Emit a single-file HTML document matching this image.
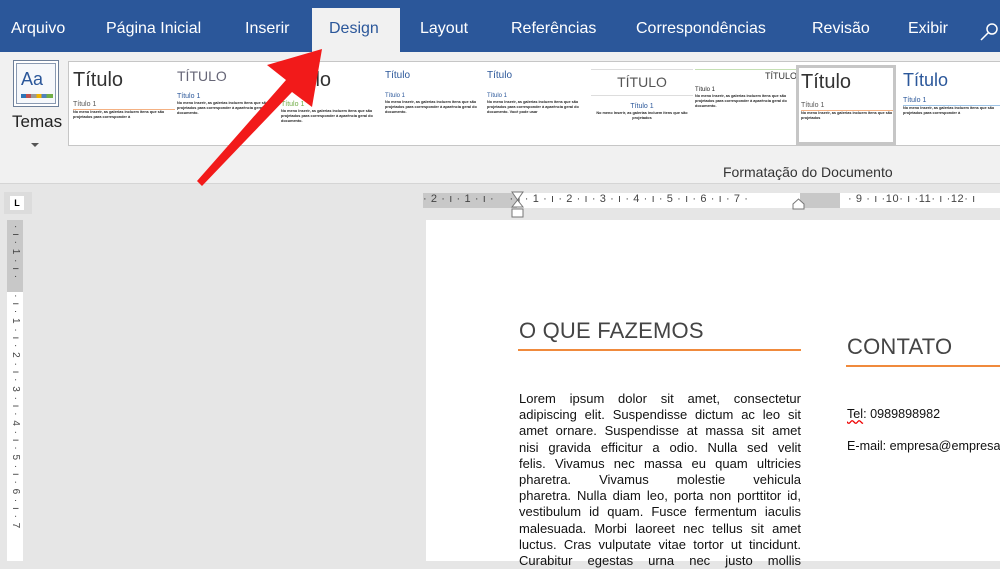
<!DOCTYPE html>
<html><head><meta charset="utf-8"><style>
*{margin:0;padding:0;box-sizing:border-box}
body{width:1000px;height:561px;overflow:hidden;position:relative;background:#e6e6e6;font-family:"Liberation Sans",sans-serif}
.abs{position:absolute}
.tabs{left:0;top:0;width:1000px;height:52px;background:#2b579a}
.tab{position:absolute;top:20px;color:#fff;font-size:16px;white-space:nowrap}
.ribbon{left:0;top:52px;width:1000px;height:132px;background:#f1f1f1;border-bottom:1px solid #d5d5d5}
.gal{left:68px;top:61px;width:940px;height:85px;background:#fff;border:1px solid #c6c6c6}
.it{position:absolute;top:0;height:83px;width:102px;overflow:hidden;font-size:3.8px;line-height:5.2px;color:#222;font-weight:bold}
.it .t{font-weight:normal}
.ruler{background:#fff}
.body{position:absolute;left:519px;top:391px;width:282px;font-size:13px;line-height:16.2px;color:#111}
.body div{text-align:justify;text-align-last:justify;white-space:nowrap}
</style></head><body>
<div class="abs tabs"></div>
<div class="abs" style="left:312px;top:8px;width:88px;height:46px;background:#f1f1f1"></div>
<div class="tab" style="left:11px">Arquivo</div>
<div class="tab" style="left:106px">Página Inicial</div>
<div class="tab" style="left:245px">Inserir</div>
<div class="tab" style="left:329px;color:#2b579a">Design</div>
<div class="tab" style="left:420px">Layout</div>
<div class="tab" style="left:511px">Referências</div>
<div class="tab" style="left:636px">Correspondências</div>
<div class="tab" style="left:812px">Revisão</div>
<div class="tab" style="left:908px">Exibir</div>
<svg class="abs" style="left:978px;top:22px" width="22" height="20"><circle cx="14" cy="7" r="5" fill="none" stroke="#fff" stroke-width="1.5"/><line x1="10" y1="11" x2="3" y2="18" stroke="#fff" stroke-width="1.5"/></svg>
<div class="abs ribbon"></div>
<div class="abs" style="left:13px;top:60px;width:46px;height:47px;border:1px solid #6d7f99;background:#fff;padding:2px">
<div style="width:40px;height:41px;border:1px solid #8a9ab2;background:#f6f8fb;position:relative">
<div style="position:absolute;left:4px;top:5px;font-size:18px;color:#2b579a">Aa</div>
<div style="position:absolute;left:4px;top:30px;width:32px;height:4px;background:linear-gradient(90deg,#2e75b6 0 16%,#c0504d 16% 32%,#999 32% 48%,#f0b400 48% 64%,#4f81bd 64% 80%,#70ad47 80%)"></div></div></div>
<div class="abs" style="left:12px;top:112px;font-size:17px;color:#222">Temas</div>
<div class="abs" style="left:31px;top:143px;width:0;height:0;border-left:4px solid transparent;border-right:4px solid transparent;border-top:4px solid #555"></div>
<div class="abs gal">
<div class="it" style="left:4px"><div class="t" style="font-size:20px;line-height:24px;margin-top:6px;color:#333">Título</div><div class="t" style="font-size:7px;line-height:9px;margin-top:8px;color:#555;border-bottom:1px solid #f4b183">Título 1</div>No meno Inserir, as galerias incluem itens que são projetados para corresponder à</div>
<div class="it" style="left:108px"><div class="t" style="font-size:14px;line-height:16px;margin-top:6px;color:#667">TÍTULO</div><div class="t" style="font-size:7px;line-height:9px;margin-top:8px;color:#2b579a">Título 1</div>No meno Inserir, as galerias incluem itens que são projetados para corresponder à aparência geral do documento.</div>
<div class="it" style="left:212px"><div class="t" style="font-size:20px;line-height:24px;margin-top:6px;color:#333">Título</div><div class="t" style="font-size:7px;line-height:9px;margin-top:8px;color:#70ad47">Título 1</div>No meno Inserir, as galerias incluem itens que são projetados para corresponder à aparência geral do documento.</div>
<div class="it" style="left:316px"><div class="t" style="font-size:10px;line-height:12px;margin-top:8px;color:#2b579a">Título</div><div class="t" style="font-size:6px;line-height:8px;margin-top:10px;color:#2b579a">Título 1</div>No meno Inserir, as galerias incluem itens que são projetados para corresponder à aparência geral do documento.</div>
<div class="it" style="left:418px"><div class="t" style="font-size:10px;line-height:12px;margin-top:8px;color:#2b579a">Título</div><div class="t" style="font-size:6px;line-height:8px;margin-top:10px;color:#2b579a">Título 1</div>No meno Inserir, as galerias incluem itens que são projetados para corresponder à aparência geral do documento. Você pode usar</div>
<div class="it" style="left:522px;text-align:center"><div class="t" style="border-top:1px solid #ddd;border-bottom:1px solid #ddd;font-size:14px;line-height:25px;margin-top:7px;color:#555">TÍTULO</div><div class="t" style="font-size:7px;line-height:9px;margin-top:6px;color:#2b579a">Título 1</div>No meno Inserir, as galerias incluem itens que são projetados</div>
<div class="it" style="left:626px"><div class="t" style="border-top:1px solid #c5e0b4;text-align:right;font-size:9px;line-height:12px;margin-top:7px;color:#333">TÍTULO</div><div class="t" style="font-size:6px;line-height:8px;margin-top:4px">Título 1</div>No meno Inserir, as galerias incluem itens que são projetados para corresponder à aparência geral do documento.</div>
<div class="it" style="left:727px;top:3px;height:80px;width:100px;border:3px solid #c6c6c6;padding-left:2px"><div class="t" style="font-size:20px;line-height:24px;margin-top:2px;color:#333">Título</div><div class="t" style="font-size:7px;line-height:9px;margin-top:7px;color:#555;border-bottom:1px solid #f4b183">Título 1</div>No meno Inserir, as galerias incluem itens que são projetados</div>
<div class="it" style="left:834px"><div class="t" style="font-size:18px;line-height:22px;margin-top:7px;color:#2b579a">Título</div><div class="t" style="font-size:7px;line-height:9px;margin-top:5px;color:#2b579a;border-bottom:1px solid #9dc3e6">Título 1</div>No meno Inserir, as galerias incluem itens que são projetados para corresponder à</div>
</div>
<div class="abs" style="left:723px;top:164px;font-size:14px;color:#333">Formatação do Documento</div>
<div class="abs" style="left:4px;top:192px;width:28px;height:22px;background:#dcdcdc"><div style="margin:4px 6px;width:14px;height:14px;background:#fff;font-size:9px;font-weight:bold;text-align:center;line-height:14px">L</div></div>
<div class="abs" style="left:423px;top:193px;width:94px;height:15px;background:#c8c8c8"></div>
<div class="abs ruler" style="left:517px;top:193px;width:283px;height:15px"></div>
<div class="abs" style="left:800px;top:193px;width:40px;height:15px;background:#c8c8c8"></div>
<div class="abs ruler" style="left:840px;top:193px;width:160px;height:15px"></div>
<div class="abs" style="left:423px;top:193px;font-size:11px;color:#444;letter-spacing:0.6px;white-space:nowrap">· 2 · ı · 1 · ı · <span style="opacity:0">X</span> · ı · 1 · ı · 2 · ı · 3 · ı · 4 · ı · 5 · ı · 6 · ı · 7 ·</div>
<div class="abs" style="left:848px;top:193px;font-size:11px;color:#444;letter-spacing:0.6px;white-space:nowrap">· 9 · ı ·10· ı ·11· ı ·12· ı</div>
<svg class="abs" style="left:511px;top:191px" width="14" height="28"><path d="M1 1H12L6.5 9L12 16H1L6.5 9Z" fill="#fff" stroke="#777"/><rect x="1" y="18" width="11" height="8" fill="#fff" stroke="#777"/></svg>
<svg class="abs" style="left:792px;top:198px" width="14" height="12"><path d="M1 11V6L6.5 1L12 6V11Z" fill="#fff" stroke="#777"/></svg>
<div class="abs" style="left:7px;top:220px;width:16px;height:72px;background:#c8c8c8"></div>
<div class="abs" style="left:7px;top:292px;width:16px;height:269px;background:#fff"></div>
<div class="abs" style="left:9px;top:225px;width:12px;height:340px;font-size:10px;color:#444;writing-mode:vertical-rl;white-space:nowrap;letter-spacing:1px">· ı · 1 · ı · <span style="opacity:0">ıı</span> · ı · 1 · ı · 2 · ı · 3 · ı · 4 · ı · 5 · ı · 6 · ı · 7</div>
<div class="abs" style="left:426px;top:220px;width:574px;height:341px;background:#fff"></div>
<div class="abs" style="left:519px;top:318px;font-size:22px;color:#444;letter-spacing:0.2px">O QUE FAZEMOS</div>
<div class="abs" style="left:518px;top:349px;width:283px;height:2px;background:#f08a3c"></div>
<div class="abs" style="left:847px;top:334px;font-size:22px;color:#444;letter-spacing:0.2px">CONTATO</div>
<div class="abs" style="left:846px;top:365px;width:154px;height:2px;background:#f08a3c"></div>
<div class="body">
<div>Lorem ipsum dolor sit amet, consectetur</div>
<div>adipiscing elit. Suspendisse dictum ac leo sit</div>
<div>amet ornare. Suspendisse at massa sit amet</div>
<div>nisi gravida efficitur a odio. Nulla sed velit</div>
<div>felis. Vivamus nec massa eu quam ultricies</div>
<div>pharetra. Vivamus molestie vehicula</div>
<div>pharetra. Nulla diam leo, porta non porttitor id,</div>
<div>vestibulum id quam. Fusce fermentum iaculis</div>
<div>malesuada. Morbi laoreet nec tellus sit amet</div>
<div>luctus. Cras vulputate vitae tortor ut tincidunt.</div>
<div>Curabitur egestas urna nec justo mollis</div>
</div>
<div class="abs" style="left:847px;top:407px;font-size:12.6px;color:#111"><span style="text-decoration:underline wavy #e00">Tel</span>: 0989898982</div>
<div class="abs" style="left:847px;top:439px;font-size:12.6px;color:#111;white-space:nowrap">E-mail: empresa@empresa.com</div>
<svg class="abs" style="left:0;top:0" width="1000" height="561"><path d="M197 181L202 186L292 92L312 107L322 49L267 65L286 80Z" fill="#f21a1a"/></svg>
</body></html>
